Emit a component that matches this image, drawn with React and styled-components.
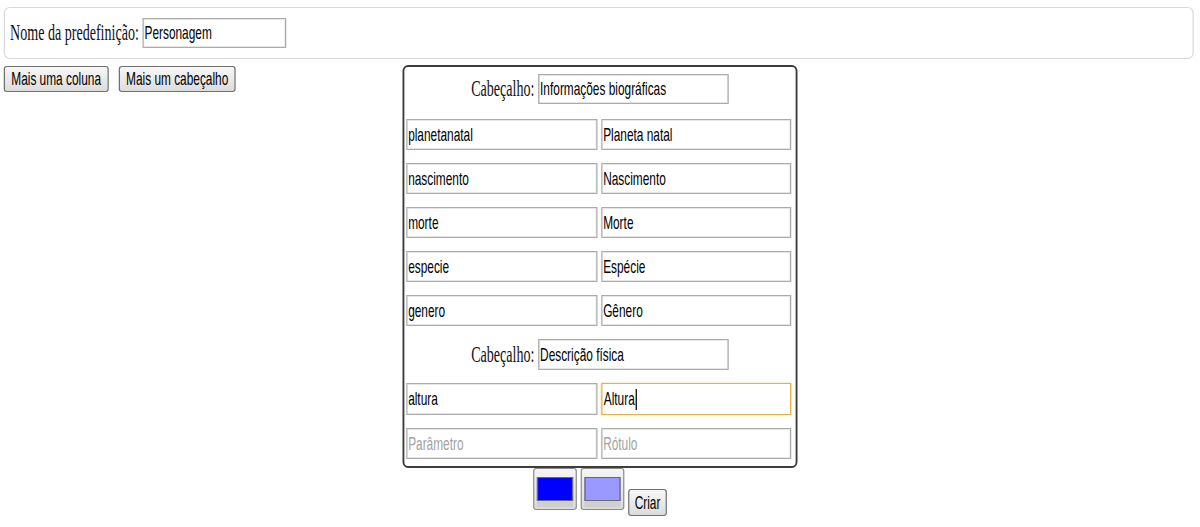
import React from "react";
import styled, { createGlobalStyle } from "styled-components";

// the reference is a horizontally squeezed capture, so the page is laid out
// at its natural width and squeezed the same way
const SQUEEZE = 0.625;

const GlobalStyle = createGlobalStyle`
  html, body {
    margin: 0;
    overflow: hidden;
    background: #fff;
  }
`;

const Stage = styled.div`
  width: ${1200 / SQUEEZE}px;
  transform: scaleX(${SQUEEZE});
  transform-origin: 0 0;
  font-family: "Liberation Sans", Arial, sans-serif;
  color: #000;
`;

const PresetBox = styled.div`
  box-sizing: border-box;
  height: 52px;
  margin: 7px 10px 0 6px;
  padding-left: 8px;
  display: flex;
  align-items: center;
  gap: 6px;
  border: 1px solid #d9d9d9;
  border-left-width: 2px;
  border-right-width: 2px;
  border-radius: 10px / 6px;
`;

const Label = styled.label`
  font-family: "Liberation Serif", "Times New Roman", serif;
  font-size: 22.5px;
  color: #111;
`;

const TextInput = styled.input`
  box-sizing: border-box;
  width: ${(p) => p.$w}px;
  height: ${(p) => p.$h || 31}px;
  padding: 0 1px;
  border: 1px solid #ababab;
  border-left-width: 2px;
  border-right-width: 2px;
  box-shadow: inset 0 0 0 1px #e6e6e6;
  background: #fff;
  font-family: "Liberation Sans", Arial, sans-serif;
  font-size: 19px;
  color: #000;
  outline: none;

  &::placeholder {
    color: #a3a3a3;
  }
`;

const FocusField = styled.div`
  box-sizing: border-box;
  width: 304px;
  height: 32px;
  padding: 0 2px;
  display: flex;
  align-items: center;
  border: 1px solid #e0b24c;
  border-left-width: 2px;
  border-right-width: 2px;
  box-shadow: 0 0 3px rgba(236, 184, 74, 0.6);
  font-size: 19px;
  color: #000;
`;

const Caret = styled.span`
  width: 2px;
  height: 21px;
  margin-left: 1px;
  background: #000;
`;

const Workspace = styled.div`
  display: grid;
  grid-template-columns: 1fr 632px 1fr;
  margin-top: 6px;
`;

const Toolbar = styled.div`
  display: flex;
  align-items: flex-start;
  gap: 16px;
  padding-left: 6px;
  margin-top: 1px;
`;

const PlainButton = styled.button`
  box-sizing: border-box;
  height: ${(p) => p.$h || 26}px;
  padding: 0 ${(p) => p.$pad || 10}px;
  border: 1px solid #707070;
  border-left-width: 2px;
  border-right-width: 2px;
  border-radius: 5px / 3px;
  background: linear-gradient(#f7f7f7, #dcdcdc);
  font-family: "Liberation Sans", Arial, sans-serif;
  font-size: 19px;
  line-height: 22px;
  color: #000;
  white-space: nowrap;
`;

const Column = styled.div`
  display: flex;
  flex-direction: column;
`;

const Panel = styled.div`
  box-sizing: border-box;
  padding: 7px 3px;
  display: flex;
  flex-direction: column;
  gap: 13px;
  border: 2px solid #3c3c3c;
  border-left-width: 3px;
  border-right-width: 3px;
  border-radius: 9px / 6px;
`;

const HeaderRow = styled.div`
  display: flex;
  justify-content: center;
  align-items: center;
  gap: 6px;
  margin-bottom: ${(p) => p.$after || 0}px;
`;

const FieldRow = styled.div`
  display: flex;
  gap: 6px;
`;

const Actions = styled.div`
  display: flex;
  justify-content: center;
  align-items: flex-start;
  gap: 6px;
`;

const ColorButton = styled.button`
  box-sizing: border-box;
  width: 70px;
  height: 42px;
  padding: 8px 4px 0;
  display: flex;
  flex-direction: column;
  border: 1px solid #8c8c8c;
  border-left-width: 2px;
  border-right-width: 2px;
  border-radius: 5px / 3px;
  background: linear-gradient(#f5f5f5, #dadada);
`;

const Swatch = styled.span`
  height: 22px;
  background: ${(p) => p.$color};
  border: 1px solid #6a6a6a;
  border-left-width: 2px;
  border-right-width: 2px;
`;

const SwatchBase = styled.span`
  height: 6px;
  background: #cfcfcf;
`;

const CreateButton = styled(PlainButton)`
  margin-top: 21px;
`;

const firstGroup = [
  ["planetanatal", "Planeta natal"],
  ["nascimento", "Nascimento"],
  ["morte", "Morte"],
  ["especie", "Espécie"],
  ["genero", "Gênero"],
];

export default function App() {
  return (
    <Stage>
      <GlobalStyle />
      <PresetBox>
        <Label>Nome da predefinição:</Label>
        <TextInput $w={230} $h={30} defaultValue="Personagem" />
      </PresetBox>

      <Workspace>
        <Toolbar>
          <PlainButton>Mais uma coluna</PlainButton>
          <PlainButton>Mais um cabeçalho</PlainButton>
        </Toolbar>

        <Column>
          <Panel>
            <HeaderRow $after={2}>
              <Label>Cabeçalho:</Label>
              <TextInput $w={305} $h={30} defaultValue="Informações biográficas" />
            </HeaderRow>
            {firstGroup.map(([param, label]) => (
              <FieldRow key={param}>
                <TextInput $w={306} defaultValue={param} />
                <TextInput $w={304} defaultValue={label} />
              </FieldRow>
            ))}
            <HeaderRow>
              <Label>Cabeçalho:</Label>
              <TextInput $w={305} $h={31} defaultValue="Descrição física" />
            </HeaderRow>
            <FieldRow>
              <TextInput $w={306} $h={32} defaultValue="altura" />
              <FocusField>
                Altura
                <Caret />
              </FocusField>
            </FieldRow>
            <FieldRow>
              <TextInput $w={306} placeholder="Parâmetro" />
              <TextInput $w={304} placeholder="Rótulo" />
            </FieldRow>
          </Panel>

          <Actions>
            <ColorButton>
              <Swatch $color="#0000ff" />
              <SwatchBase />
            </ColorButton>
            <ColorButton>
              <Swatch $color="#9999ff" />
              <SwatchBase />
            </ColorButton>
            <CreateButton $h={27} $pad={8}>
              Criar
            </CreateButton>
          </Actions>
        </Column>
        <div />
      </Workspace>
    </Stage>
  );
}
